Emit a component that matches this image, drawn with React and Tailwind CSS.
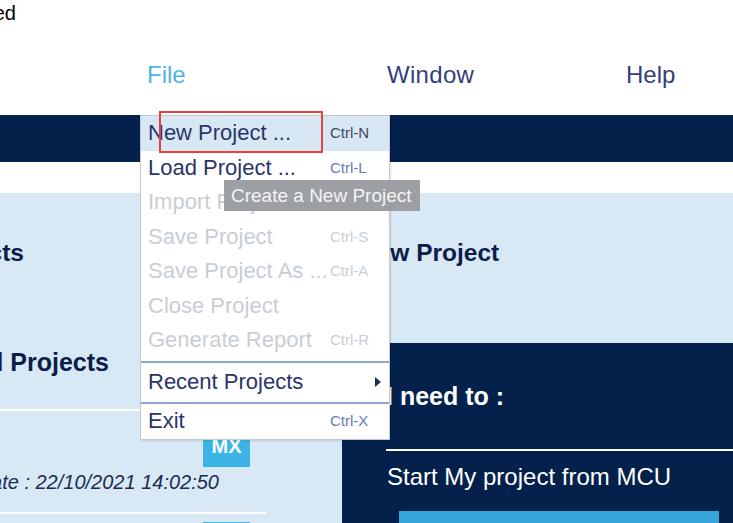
import React from 'react'

const items = [
  { label: 'New Project ...', key: 'Ctrl-N', on: true, active: true },
  { label: 'Load Project ...', key: 'Ctrl-L', on: true },
  { label: 'Import Project ...', key: 'Ctrl-I', on: false },
  { label: 'Save Project', key: 'Ctrl-S', on: false },
  { label: 'Save Project As ...', key: 'Ctrl-A', on: false },
  { label: 'Close Project', key: '', on: false },
  { label: 'Generate Report', key: 'Ctrl-R', on: false },
]

function FileMenu() {
  return (
    <div className="absolute left-[140px] top-[115px] w-[250px] h-[325px] bg-white border border-[#c4c8cd] shadow-[1px_1px_2px_rgba(0,0,0,0.12)] flex flex-col">
      {items.map((it) => (
        <div
          key={it.label}
          className={`h-[34.5px] flex items-center pl-[7px] ${it.active ? 'bg-[#d8e7f4]' : ''}`}
        >
          <span
            className={`flex-1 whitespace-nowrap overflow-hidden text-[22px] leading-[26px] ${it.on ? 'text-[#2b3569]' : 'text-[#c9ced4]'}`}
          >
            {it.label}
          </span>
          <span
            className={`w-[59px] shrink-0 text-[15px] leading-[20px] ${it.active ? 'text-[#3e4560]' : it.on ? 'text-[#6a79be]' : 'text-[#c9ced4]'}`}
          >
            {it.key}
          </span>
        </div>
      ))}
      <div className="mt-[3px] h-[2px] bg-[#8fa4d8]" />
      <div className="h-[39px] flex items-center pl-[7px] pr-[8px]">
        <span className="flex-1 text-[22px] leading-[26px] text-[#2b3569]">Recent Projects</span>
        <svg width="6" height="10" viewBox="0 0 6 10">
          <path d="M0 0 L6 5 L0 10 Z" fill="#1f2a58" />
        </svg>
      </div>
      <div className="h-[2px] bg-[#8fa4d8]" />
      <div className="flex-1 flex items-center pl-[7px]">
        <span className="flex-1 text-[22px] leading-[26px] text-[#2b3569]">Exit</span>
        <span className="w-[59px] shrink-0 text-[15px] leading-[20px] text-[#6a79be]">Ctrl-X</span>
      </div>
    </div>
  )
}

function ProjectRow() {
  return (
    <div className="flex flex-col">
      <div className="mt-[9px] ml-[203px] w-[47px] h-[47px] bg-[#3cb4e5] flex justify-center">
        <span className="pt-[14px] text-[20px] leading-[24px] font-bold text-white">MX</span>
      </div>
      <div className="mt-[3px] flex justify-end w-[219px]">
        <span className="whitespace-nowrap italic text-[20px] leading-[24px] text-[#1e2a4f]">
          Last Modified Date : 22/10/2021 14:02:50
        </span>
      </div>
      <div className="mt-[18px] h-[2px] w-[266px] bg-white" />
    </div>
  )
}

export default function App() {
  return (
    <div className="w-[733px] h-[523px] overflow-hidden relative bg-white flex flex-col font-['Liberation_Sans',Arial,sans-serif]">
      <div className="h-[40px] shrink-0">
        <div className="flex justify-end w-[16px]">
          <span className="whitespace-nowrap text-[20px] leading-[26px] text-black">Connected</span>
        </div>
      </div>

      <div className="h-[75px] shrink-0 pl-[147px] pt-[21px] flex text-[24px] leading-[28px]">
        <span className="w-[240px] text-[#4fb3e6]">File</span>
        <span className="w-[239px] text-[#33407a] tracking-[0.3px]">Window</span>
        <span className="text-[#33407a]">Help</span>
      </div>

      <div className="h-[47px] shrink-0 bg-[#03214b]" />
      <div className="h-[31px] shrink-0 bg-white" />

      <div className="flex-1 bg-[#d8e8f5] flex">
        <div className="w-[342px] shrink-0 flex flex-col">
          <div className="mt-[46px] flex justify-end w-[24px]">
            <span className="whitespace-nowrap text-[24.5px] leading-[28px] font-bold text-[#0c1d4a]">
              Existing Projects
            </span>
          </div>
          <div className="mt-[81px] flex justify-end w-[109px]">
            <span className="whitespace-nowrap text-[25px] leading-[28px] font-bold text-[#0c1d4a]">
              Recent Opened Projects
            </span>
          </div>
          <div className="mt-[33px] h-[2px] w-[266px] bg-white" />
          <ProjectRow />
          <div className="mt-[8px] ml-[203px] w-[47px] h-[47px] bg-[#3cb4e5]" />
        </div>

        <div className="flex-1 flex flex-col">
          <div className="mt-[46px] pl-[17px] text-[24.5px] leading-[28px] font-bold text-[#0c1d4a] whitespace-nowrap">
            New Project
          </div>
          <div className="mt-[76px] flex-1 bg-[#03214b] flex flex-col">
            <div className="mt-[39px] pl-[44px] text-[25px] leading-[28px] font-bold text-white whitespace-nowrap">
              I need to :
            </div>
            <div className="mt-[39px] ml-[44px] h-[2px] bg-white" />
            <div className="mt-[12px] pl-[45px] text-[24px] leading-[28px] text-white whitespace-nowrap">
              Start My project from MCU
            </div>
            <div className="mt-[20px] ml-[57px] w-[320px] h-[40px] bg-[#36a5da]" />
          </div>
        </div>
      </div>

      <FileMenu />

      <div className="absolute left-[224px] top-[180px] w-[196px] h-[31px] bg-[#9ca0a4] pl-[7px] text-[19px] leading-[31px] text-[#f4f4f4] whitespace-nowrap">
        Create a New Project
      </div>

      <div className="absolute left-[159px] top-[111px] w-[164px] h-[42px] border-2 border-[#e8413c]" />
    </div>
  )
}
